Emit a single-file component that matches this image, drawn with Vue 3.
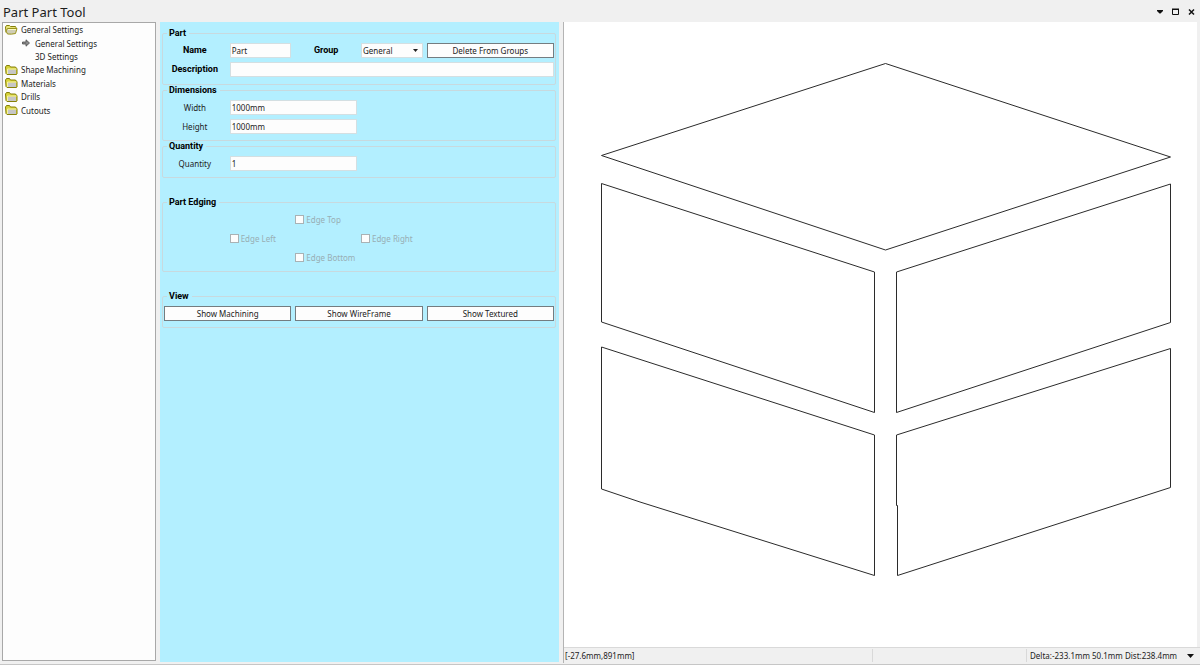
<script setup>
import { ref } from 'vue'

const tree = [
  { label: 'General Settings', icon: 'open', level: 0 },
  { label: 'General Settings', icon: 'arrow', level: 1 },
  { label: '3D Settings', icon: 'none', level: 1 },
  { label: 'Shape Machining', icon: 'closed', level: 0 },
  { label: 'Materials', icon: 'closed', level: 0 },
  { label: 'Drills', icon: 'closed', level: 0 },
  { label: 'Cutouts', icon: 'closed', level: 0 },
]

const name = ref('Part')
const group = ref('General')
const description = ref('')
const width = ref('1000mm')
const height = ref('1000mm')
const quantity = ref('1')

const edges = [
  { label: 'Edge Top', cls: 'top' },
  { label: 'Edge Left', cls: 'left' },
  { label: 'Edge Right', cls: 'right' },
  { label: 'Edge Bottom', cls: 'bottom' },
]
const views = ['Show Machining', 'Show WireFrame', 'Show Textured']
</script>

<template>
  <div class="window">
    <header class="titlebar">
      <h1>Part Part Tool</h1>
      <div class="controls">
        <button type="button" aria-label="Window menu">
          <svg width="8" height="8" viewBox="0 0 8 8"><path d="M1 2h6v1L4.500 5.500h-1L1 3z" fill="#111" /></svg>
        </button>
        <button type="button" aria-label="Maximize">
          <svg width="8" height="8" viewBox="0 0 8 8"><path d="M.5 1.500h6v5h-6z" fill="none" stroke="#111" /><path d="M0 .5h7v1.500H0z" fill="#111" /></svg>
        </button>
        <button type="button" aria-label="Close">
          <svg width="8" height="8" viewBox="0 0 8 8"><path d="M1 1.500l5 5M6 1.500l-5 5" fill="none" stroke="#111" stroke-width="1.500" /></svg>
        </button>
      </div>
    </header>

    <main class="body">
      <nav class="tree" aria-label="Settings">
        <ul>
          <li v-for="(item, i) in tree" :key="i" :class="{ child: item.level }">
            <a href="#">
              <svg v-if="item.icon === 'closed'" width="13" height="12" viewBox="0 0 13 12">
                <path d="M1 9.500L.5 3l1-1.500h3l1 1.500h5l.5 1 1 .5v5.500l-.5.500H2z" fill="#d6d23a" stroke="#86800a" />
                <path d="M3 5.500h8V10H3z" fill="#c6c6c6" />
                <path d="M2.500 10V5h9" fill="none" stroke="#f5f2a0" />
              </svg>
              <svg v-else-if="item.icon === 'open'" width="13" height="12" viewBox="0 0 13 12">
                <path d="M1 8.500L.5 3l1-1.500h3l1 1h5l.5 1v2" fill="#e8e47a" stroke="#86800a" />
                <path d="M2.500 4.500h9.500l-1.500 5q-4 1-8 .5L1 7z" fill="#cfcdb4" stroke="#9a941c" />
                <path d="M3 5.500h8" stroke="#fbf9c0" fill="none" />
              </svg>
              <svg v-else-if="item.icon === 'arrow'" width="8" height="8" viewBox="0 0 8 8">
                <path d="M.5 3h3.500V.8L7.500 4 4 7.200V5H.5z" fill="#8a8a8a" stroke="#4c4c4c" stroke-width=".8" />
              </svg>
              <span v-else class="blank"></span>
              <span>{{ item.label }}</span>
            </a>
          </li>
        </ul>
      </nav>

      <form class="form" @submit.prevent>
        <fieldset class="identity">
          <legend>Part</legend>
          <div class="grid">
            <label class="strong" for="name">Name</label>
            <input id="name" v-model="name" type="text" />
            <label class="strong" for="group">Group</label>
            <span class="select">
              <select id="group" v-model="group"><option>General</option></select>
              <svg width="5" height="3" viewBox="0 0 5 3"><path d="M0 0h5L2.500 3z" fill="#222" /></svg>
            </span>
            <button type="button" class="span2">Delete From Groups</button>
            <label class="strong" for="description">Description</label>
            <input id="description" v-model="description" type="text" class="span5" />
          </div>
        </fieldset>
        <fieldset>
          <legend>Dimensions</legend>
          <div class="grid">
            <label for="width">Width</label>
            <input id="width" v-model="width" type="text" class="span2" />
            <label class="row2" for="height">Height</label>
            <input id="height" v-model="height" type="text" class="span2" />
          </div>
        </fieldset>
        <fieldset>
          <legend>Quantity</legend>
          <div class="grid">
            <label for="quantity">Quantity</label>
            <input id="quantity" v-model="quantity" type="text" class="span2" />
          </div>
        </fieldset>
        <fieldset class="apart">
          <legend>Part Edging</legend>
          <div class="grid">
            <label v-for="e in edges" :key="e.cls" class="check" :class="e.cls">
              <input type="checkbox" disabled />{{ e.label }}
            </label>
          </div>
        </fieldset>
        <fieldset class="apart">
          <legend>View</legend>
          <div class="grid">
            <button v-for="v in views" :key="v" type="button" class="span2">{{ v }}</button>
          </div>
        </fieldset>
      </form>

      <section class="viewer">
        <div class="canvas">
          <svg viewBox="564 22 633 625" role="img" aria-label="Part wireframe">
            <g fill="none" stroke="#2b2b2b" stroke-width="1">
              <path d="M601.500 155.500L885.500 63.500L1170.500 157L885.500 250z" />
              <path d="M601.500 183.500L874.500 272V412.500L601.500 322z" />
              <path d="M896.500 272L1170.500 184V322.500L896.500 412.500z" />
              <path d="M601.500 347L874.500 435V575.500L640 502L601.500 489z" />
              <path d="M896.500 435L1170.500 348.500V487.500L897.500 575.500V505.500H896.500z" />
            </g>
          </svg>
        </div>
        <footer class="status">
          <span class="position">[-27.6mm,891mm]</span>
          <span class="message"></span>
          <span class="delta">Delta:-233.1mm 50.1mm Dist:238.4mm</span>
          <button type="button" aria-label="Status options">
            <svg width="7" height="4" viewBox="0 0 7 4"><path d="M0 0h7L3.500 4z" fill="#111" /></svg>
          </button>
        </footer>
      </section>
    </main>
  </div>
</template>

<style>
body {
  margin: 0;
  background: #f0f0f0;
}
</style>

<style scoped>
.window {
  box-sizing: border-box;
  display: flex;
  flex-direction: column;
  height: 100vh;
  background: #f0f0f0;
  border-bottom: 1px solid #c6c6c6;
  color: #1c1c1c;
  font-family: "Noto Sans", "Open Sans", sans-serif;
  font-size: 8px;
}
button,
input,
select {
  box-sizing: border-box;
  margin: 0;
  font: inherit;
  color: inherit;
}
.titlebar {
  display: flex;
  align-items: center;
  justify-content: space-between;
  height: 22px;
  padding: 2px 4px 0 3px;
  box-sizing: border-box;
}
h1 {
  margin: 0;
  font-size: 13px;
  font-weight: 400;
  line-height: 20px;
}
.controls {
  display: flex;
  gap: 8px;
}
.controls button,
.status button {
  display: flex;
  padding: 0;
  border: 0;
  background: none;
}
.body {
  display: flex;
  flex: 1;
  min-height: 0;
}
.tree {
  box-sizing: border-box;
  flex: none;
  width: 154px;
  margin: 0 4px 3px 2px;
  border: 1px solid #a8a8a8;
  background: #fdfdfd;
}
.tree ul {
  display: grid;
  grid-auto-rows: 1fr;
  height: 94px;
  margin: 0;
  padding: 0 0 0 2px;
  list-style: none;
}
.tree li {
  display: flex;
  align-items: center;
}
.tree li.child {
  padding-left: 17px;
}
.tree a {
  display: flex;
  align-items: center;
  gap: 3px;
  color: inherit;
  text-decoration: none;
  line-height: 13px;
}
.child a {
  gap: 5px;
}
.blank {
  width: 8px;
}
.form {
  box-sizing: border-box;
  flex: none;
  width: 399px;
  margin-bottom: 2px;
  padding: 6px 3px 0 2px;
  background: #b3efff;
  color: #222;
}
fieldset {
  min-width: 0;
  margin: 0;
  padding: 5px 1px 6px;
  border: 1px solid #c8d9de;
  border-radius: 2px;
}
fieldset.identity {
  padding-bottom: 7px;
}
fieldset.apart {
  margin-top: 19px;
}
legend {
  margin-left: 3px;
  padding: 0 3px 0 2px;
  color: #000;
  font-family: Roboto, "Liberation Sans", sans-serif;
  font-size: 9px;
  font-weight: 700;
  line-height: 10px;
}
.grid {
  display: grid;
  grid-template-columns: repeat(6, minmax(0, 1fr));
  grid-auto-rows: 15px;
  gap: 4px;
  align-items: stretch;
}
.grid label {
  text-align: center;
  line-height: 15px;
  white-space: nowrap;
}
.grid .strong {
  color: #000;
  font-family: Roboto, "Liberation Sans", sans-serif;
  font-size: 9px;
  font-weight: 700;
}
.grid input[type="text"],
.grid select {
  width: 100%;
  min-width: 0;
  height: 15px;
  padding: 0 1px;
  border: 1px solid #d4dfe2;
  border-radius: 0;
  background: #fdfdfd;
}
.grid .row2 {
  grid-column: 1;
}
.grid .span2 {
  grid-column: span 2;
}
.grid .span5 {
  grid-column: span 5;
}
.select {
  position: relative;
}
.grid select {
  appearance: none;
}
.select svg {
  position: absolute;
  top: 6px;
  right: 5px;
  pointer-events: none;
}
.grid button {
  padding: 0;
  border: 1px solid #747c80;
  background: #fdfdfd;
  line-height: 13px;
}
.grid .check {
  display: flex;
  align-items: center;
  gap: 2px;
  color: #98aeb4;
}
.check input {
  appearance: none;
  width: 9px;
  height: 9px;
  border: 1px solid #a9b2b5;
  background: #fdfdfd;
}
.top {
  grid-area: 1 / 3;
}
.left {
  grid-area: 2 / 2;
}
.right {
  grid-area: 2 / 4;
}
.bottom {
  grid-area: 3 / 3;
}
.viewer {
  display: flex;
  flex: 1;
  flex-direction: column;
  min-width: 0;
  margin: 0 0 1px 4px;
  border-left: 1px solid #b4b4b4;
}
.canvas {
  flex: 1;
  min-height: 0;
  margin-right: 3px;
  background: #fff;
}
.canvas svg {
  display: block;
  width: 100%;
  height: 100%;
}
.status {
  box-sizing: border-box;
  display: flex;
  align-items: center;
  height: 16px;
  padding-right: 6px;
  border-top: 1px solid #d9d9d9;
  white-space: nowrap;
  line-height: 13px;
}
.position {
  flex: 2;
  padding-left: 1px;
  border-right: 1px solid #d9d9d9;
}
.message {
  flex: 1;
  height: 13px;
  border-right: 1px solid #d9d9d9;
}
.delta {
  width: 151px;
  margin: 0 6px 0 3px;
  overflow: hidden;
}
</style>
